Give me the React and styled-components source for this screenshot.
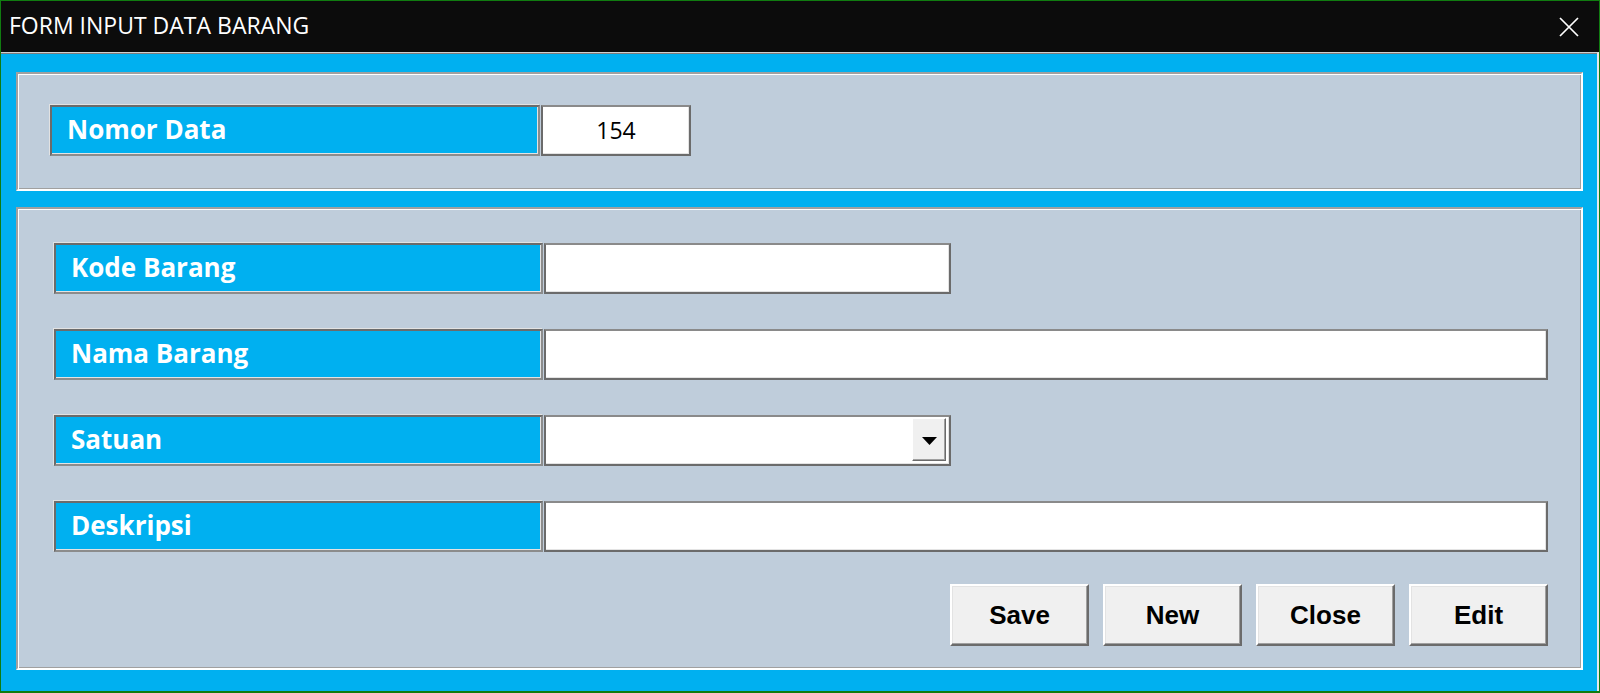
import React, { useState } from "react";
import styled, { createGlobalStyle } from "styled-components";

const GlobalStyle = createGlobalStyle`
  html, body {
    margin: 0;
    padding: 0;
    background: #ffffff;
  }
  * {
    box-sizing: border-box;
  }
`;

const App = () => {
  const [form, setForm] = useState({
    kode: "",
    nama: "",
    satuan: "",
    deskripsi: "",
  });

  const update = (key) => (e) => setForm({ ...form, [key]: e.target.value });

  return (
    <Window>
      <GlobalStyle />
      <TitleBar>
        <Title>FORM INPUT DATA BARANG</Title>
        <CloseIcon aria-label="close">
          <svg width="20" height="20" viewBox="0 0 20 20">
            <path
              d="M1 1 L19 19 M19 1 L1 19"
              stroke="#ffffff"
              strokeWidth="1.7"
              fill="none"
            />
          </svg>
        </CloseIcon>
      </TitleBar>

      <Client>
        <Frame $padTop={31} $padLeft={32} $padBottom={33} $height={119}>
          <Row>
            <Label $w={490}>Nomor Data</Label>
            <TextBox $w={150} $center defaultValue="154" readOnly />
          </Row>
        </Frame>

        <Frame $padTop={34} $padLeft={36} $padBottom={22} $height={463}>
          <Rows>
            <Row>
              <Label $w={489}>Kode Barang</Label>
              <TextBox $w={407} value={form.kode} onChange={update("kode")} />
            </Row>
            <Row>
              <Label $w={489}>Nama Barang</Label>
              <TextBox $grow value={form.nama} onChange={update("nama")} />
            </Row>
            <Row>
              <Label $w={489}>Satuan</Label>
              <Combo>
                <ComboValue>{form.satuan}</ComboValue>
                <ComboButton>
                  <svg width="15" height="8" viewBox="0 0 15 8">
                    <path d="M0 0 H15 L7.5 8 Z" fill="#000000" />
                  </svg>
                </ComboButton>
              </Combo>
            </Row>
            <Row>
              <Label $w={489}>Deskripsi</Label>
              <TextBox
                $grow
                value={form.deskripsi}
                onChange={update("deskripsi")}
              />
            </Row>
          </Rows>

          <ButtonRow>
            <Button>Save</Button>
            <Button>New</Button>
            <Button>Close</Button>
            <Button>Edit</Button>
          </ButtonRow>
        </Frame>
      </Client>
    </Window>
  );
};

const Window = styled.div`
  width: 1600px;
  height: 693px;
  border: 1px solid #107c10;
  border-bottom-width: 2px;
  display: flex;
  flex-direction: column;
  overflow: hidden;
`;

const TitleBar = styled.div`
  height: 51px;
  flex: none;
  background: #0c0c0c;
  display: flex;
  align-items: center;
  justify-content: space-between;
  padding: 0 20px 4px 8px;
`;

const Title = styled.div`
  font-family: "Open Sans", "Liberation Sans", sans-serif;
  font-size: 23px;
  color: #ffffff;
`;

const CloseIcon = styled.div`
  width: 20px;
  height: 20px;
  display: flex;
  margin-top: 4px;
  cursor: pointer;
`;

const Client = styled.div`
  flex: 1;
  background: #00b0f0;
  border-top: 1px solid #d0d0d0;
  border-right: 2px solid #e8e8e8;
  box-shadow: inset 0 1px 0 #7c7c7c;
  padding: 19px 14px 0 15px;
  display: flex;
  flex-direction: column;
  gap: 16px;
`;

const Frame = styled.div`
  height: ${(p) => p.$height}px;
  flex: none;
  background: #bfcddb;
  border: 2px solid;
  border-color: #a0a0a0 #ffffff #ffffff #a0a0a0;
  box-shadow: inset 1px 1px 0 #ffffff, inset -1px -1px 0 #a0a0a0;
  padding: ${(p) => p.$padTop}px 33px ${(p) => p.$padBottom}px
    ${(p) => p.$padLeft}px;
  display: flex;
  flex-direction: column;
`;

const Rows = styled.div`
  display: flex;
  flex-direction: column;
  gap: 35px;
`;

const Row = styled.div`
  display: flex;
  align-items: stretch;
  gap: 1px;
  height: 51px;
`;

const Label = styled.div`
  width: ${(p) => p.$w}px;
  flex: none;
  background: #00b0f0;
  border: 2px solid;
  border-color: #6b6b6b #8c8c8c #8c8c8c #6b6b6b;
  box-shadow: -1px -1px 0 #e2e2e2, inset -1px -1px 0 #e3e3e3;
  display: flex;
  align-items: center;
  padding: 0 0 4px 15px;
  font-family: "Open Sans", "Liberation Sans", sans-serif;
  font-weight: 700;
  font-size: 26px;
  color: #ffffff;
`;

const TextBox = styled.input`
  width: ${(p) => (p.$grow ? "auto" : `${p.$w}px`)};
  flex: ${(p) => (p.$grow ? "1" : "none")};
  min-width: 0;
  height: 100%;
  margin: 0;
  background: #ffffff;
  border: 2px solid;
  border-color: #8a8a8a #6b6b6b #6b6b6b #6b6b6b;
  box-shadow: inset -1px -1px 0 #e3e3e3;
  outline: none;
  padding: 0 4px 2px;
  text-align: ${(p) => (p.$center ? "center" : "left")};
  font-family: "Open Sans", "Liberation Sans", sans-serif;
  font-size: 23px;
  color: #000000;
`;

const Combo = styled.div`
  width: 407px;
  flex: none;
  background: #ffffff;
  border: 2px solid;
  border-color: #8a8a8a #6b6b6b #6b6b6b #6b6b6b;
  box-shadow: inset -1px -1px 0 #e3e3e3;
  display: flex;
  align-items: stretch;
  padding: 1px 3px 3px 0;
`;

const ComboValue = styled.div`
  flex: 1;
  font-family: "Open Sans", "Liberation Sans", sans-serif;
  font-size: 23px;
`;

const ComboButton = styled.div`
  width: 34px;
  flex: none;
  background: #f0f0f0;
  border: 1px solid;
  border-color: #ffffff #6b6b6b #6b6b6b #ffffff;
  box-shadow: inset -1px -1px 0 #a0a0a0;
  display: flex;
  align-items: center;
  justify-content: center;
  padding-top: 2px;
`;

const ButtonRow = styled.div`
  display: flex;
  justify-content: flex-end;
  gap: 14px;
  margin-top: 32px;
`;

const Button = styled.button`
  width: 139px;
  height: 62px;
  margin: 0;
  background: #f0f0f0;
  border: 2px solid;
  border-color: #ffffff #6b6b6b #6b6b6b #ffffff;
  box-shadow: inset -1px -1px 0 #a0a0a0, inset 1px 1px 0 #e3e3e3;
  font-family: "Liberation Sans", Arial, sans-serif;
  font-weight: 700;
  font-size: 26px;
  color: #000000;
  cursor: pointer;
  padding: 0;
`;

export default App;
